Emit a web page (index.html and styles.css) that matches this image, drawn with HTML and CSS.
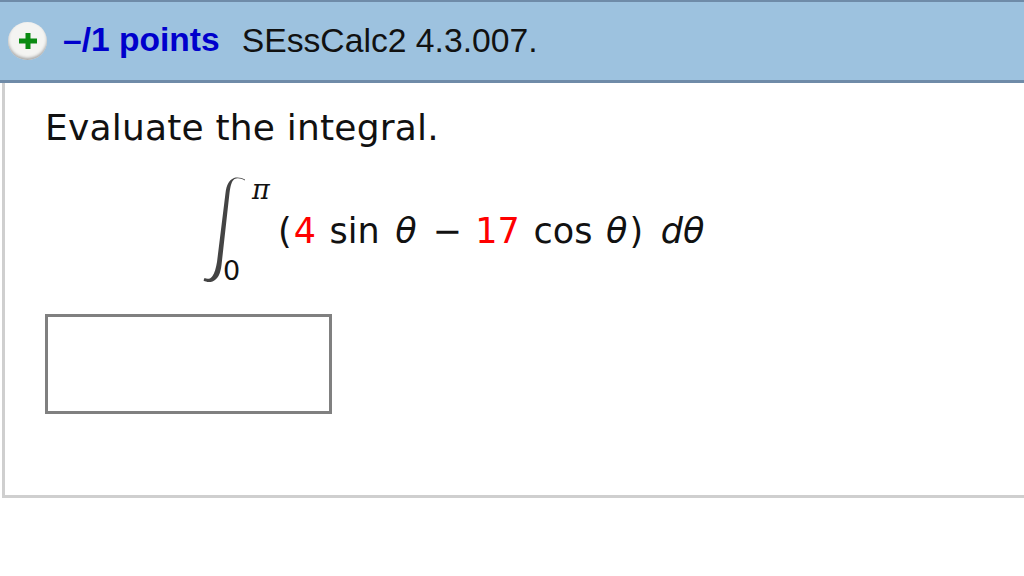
FILE: index.html
```html
<!DOCTYPE html>
<html lang="en">
<head>
  <meta charset="UTF-8">
  <title>SEssCalc2 4.3.007</title>
  <link rel="stylesheet" href="styles.css">
</head>
<body>
  <header class="question-bar">
    <span class="expand-btn">
      <svg width="20" height="18" viewBox="0 0 20 18">
        <path d="M10 1v16M1 9h18" stroke="#0a8a12" stroke-width="5" fill="none"/>
      </svg>
    </span>
    <span class="points">&ndash;/1 points</span>
    <span class="code">SEssCalc2 4.3.007.</span>
  </header>

  <main class="question-body">
    <p class="prompt">Evaluate the integral.</p>

    <div class="formula">
      <svg class="integral" width="42" height="106" viewBox="0 0 42 106">
        <path d="M42 3.5C38 1 34 0.5 31.5 2C28.5 4 27.5 9 26.5 16L18.5 88C17.5 97 14.5 102.5 9.5 104.5C6 105.5 3 105 0.5 103.5L1.5 101C4.5 102.5 7.5 102 9.5 99C11.5 96 13 91 14 85L22.5 16C23.5 8 26 3 31 1C35 0 39 1 42 2.5Z" fill="#444"/>
      </svg>
      <div class="limits">
        <span class="upper">&pi;</span>
        <span class="lower">0</span>
      </div>
      <div class="expr">(<span class="red first">4</span> sin <i>&theta;</i> &minus; <span class="red second">17</span><span class="tail"> cos <i>&theta;</i></span><span class="paren">)</span> <i class="diff">d&theta;</i></div>
    </div>

    <input class="answer" type="text">
  </main>
</body>
</html>
```

FILE: styles.css
```css
* { margin: 0; padding: 0; box-sizing: border-box; }
body {
  font-family: "DejaVu Sans", sans-serif;
  background: #ffffff;
  color: #111;
  height: 576px;
  overflow: hidden;
}
.question-bar {
  height: 83px;
  background: #9dc2df;
  border-top: 2px solid #6f8ba8;
  border-bottom: 3px solid #6f8ba8;
  display: flex;
  align-items: center;
  padding-left: 8px;
  font-family: "Liberation Sans", Arial, sans-serif;
}
.expand-btn {
  width: 39px;
  height: 38px;
  border-radius: 50%;
  background: #f4f4f2;
  box-shadow: inset 0 -2px 3px #aaa;
  display: flex;
  align-items: center;
  justify-content: center;
}
.points {
  margin-left: 16px;
  font-size: 33.6px;
  font-weight: 700;
  color: #0000cc;
  position: relative;
  top: -1px;
}
.code {
  margin-left: 22px;
  font-size: 33.7px;
  color: #111;
  position: relative;
  top: -1px;
}
.question-body {
  margin-left: 2px;
  height: 415px;
  border-left: 3px solid #cfcfcf;
  border-bottom: 3px solid #cfcfcf;
  padding: 23px 0 0 40px;
}
.prompt {
  font-size: 36px;
  line-height: 44px;
  letter-spacing: 0.2px;
}
.formula {
  display: flex;
  margin: 27px 0 0 158px;
  height: 106px;
}
.limits {
  display: flex;
  flex-direction: column;
  justify-content: space-between;
  width: 53px;
  margin-left: -22px;
  padding-bottom: 0;
  font-size: 27px;
  line-height: 30px;
}
.upper {
  margin: -2px 0 0 29px;
  font-family: "DejaVu Serif", serif;
  font-style: italic;
}
.lower {
  margin-bottom: -3px;
}
.expr {
  font-size: 35px;
  line-height: 42px;
  margin: 33px 0 0 2px;
  word-spacing: 4.5px;
  white-space: nowrap;
}
.red { color: #ff0000; }
.first { margin-left: 2px; margin-right: -2px; }
.second { margin-left: -2px; }
.tail { word-spacing: 2.5px; }
.paren { margin-left: 2px; }
.diff { margin-left: 2px; }
.answer {
  display: block;
  width: 287px;
  height: 100px;
  margin-top: 31px;
  border: 3px solid #808080;
  background: #fff;
}
```
